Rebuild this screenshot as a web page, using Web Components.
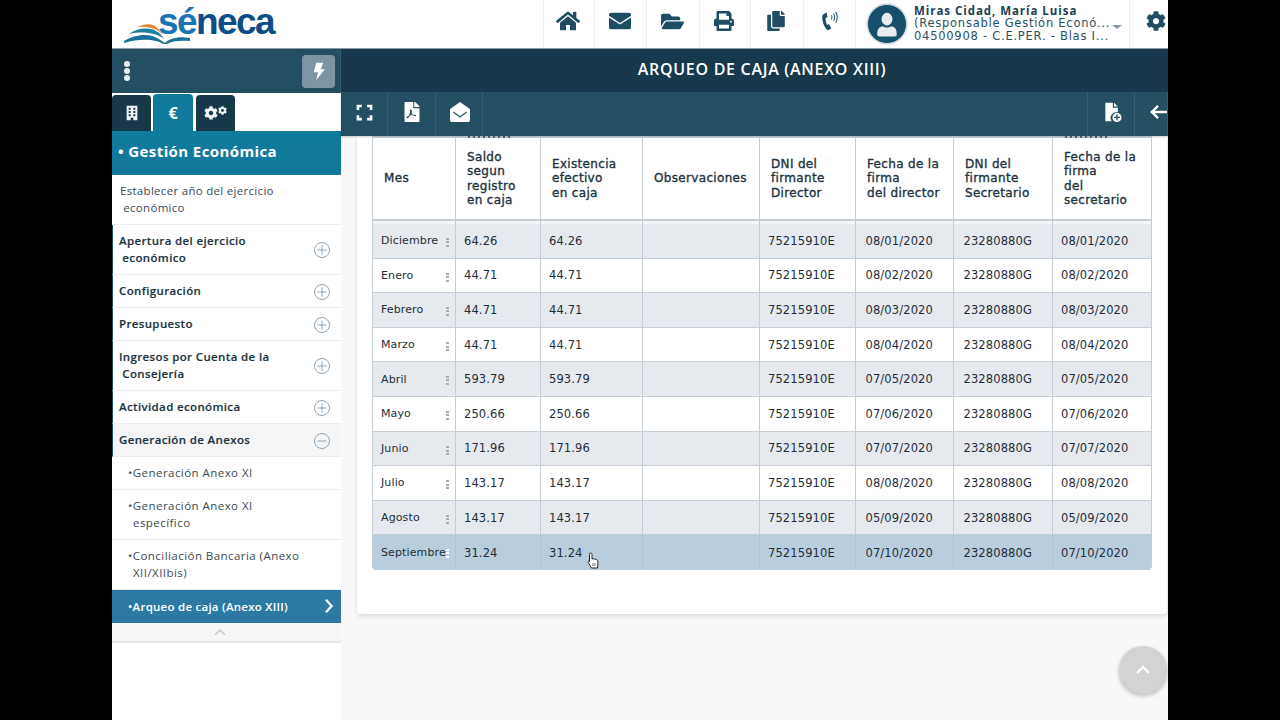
<!DOCTYPE html>
<html lang="es">
<head>
<meta charset="utf-8">
<title>Arqueo de caja</title>
<style>
  html, body { margin: 0; height: 100%; background: #000; overflow: hidden; }
  body { display: flex; justify-content: center; font-family: "Open Sans", "DejaVu Sans", sans-serif; }
</style>
</head>
<body>
<seneca-app></seneca-app>

<script>
const ICONS = {
    home: ["0 0 576 512", "M280.37 148.26L96 300.11V464a16 16 0 0 0 16 16l112.06-.29a16 16 0 0 0 15.92-16V368a16 16 0 0 1 16-16h64a16 16 0 0 1 16 16v95.64a16 16 0 0 0 16 16.05L464 480a16 16 0 0 0 16-16V300L295.67 148.26a12.19 12.19 0 0 0-15.3 0zM571.6 251.47L488 182.56V44.05a12 12 0 0 0-12-12h-56a12 12 0 0 0-12 12v72.61L318.47 43a48 48 0 0 0-61 0L4.34 251.47a12 12 0 0 0-1.6 16.9l25.5 31A12 12 0 0 0 45.15 301l235.22-193.74a12.19 12.19 0 0 1 15.3 0L530.9 301a12 12 0 0 0 16.9-1.6l25.5-31a12 12 0 0 0-1.7-16.93z"],
    mail: ["0 0 512 512", "M48 64h416c26.5 0 48 21.5 48 48v22L256 300 0 134v-22c0-26.5 21.5-48 48-48zM0 174v226c0 26.5 21.5 48 48 48h416c26.5 0 48-21.5 48-48V174L256 340z"],
    folder: ["0 0 576 512", "M572.694 292.093L500.27 416.248A63.997 63.997 0 0 1 444.989 448H45.025c-18.523 0-30.064-20.093-20.731-36.093l72.424-124.155A64 64 0 0 1 152 256h399.964c18.523 0 30.064 20.093 20.73 36.093zM152 224h328v-48c0-26.51-21.49-48-48-48H272l-64-64H48C21.49 64 0 85.49 0 112v278.046l69.077-118.418C86.214 242.25 117.989 224 152 224z"],
    print: ["0 0 512 512", "M448 192V77.25c0-8.49-3.37-16.62-9.37-22.63L393.37 9.37c-6-6-14.14-9.37-22.63-9.37H96C78.33 0 64 14.33 64 32v160c-35.35 0-64 28.65-64 64v112c0 8.84 7.16 16 16 16h48v96c0 17.67 14.33 32 32 32h320c17.67 0 32-14.33 32-32v-96h48c8.84 0 16-7.16 16-16V256c0-35.35-28.65-64-64-64zm-64 256H128v-96h256v96zm0-224H128V64h192v48c0 8.84 7.16 16 16 16h48v96zm48 72c-13.25 0-24-10.75-24-24 0-13.26 10.75-24 24-24s24 10.74 24 24c0 13.25-10.75 24-24 24z"],
    copy: ["0 0 448 512", "M320 448v40c0 13.25-10.75 24-24 24H24c-13.25 0-24-10.75-24-24V120c0-13.25 10.75-24 24-24h72v296c0 30.88 25.12 56 56 56h168zm0-344V0H152c-13.25 0-24 10.75-24 24v368c0 13.25 10.75 24 24 24h272c13.25 0 24-10.75 24-24V128H344c-13.2 0-24-10.8-24-24zm120.97-31.03L375.03 7.03A24 24 0 0 0 358.06 0H352v96h96v-6.06a24 24 0 0 0-7.03-16.97z"],
    gear: ["0 0 512 512", "M487.4 315.7l-42.6-24.6c4.3-23.2 4.3-47 0-70.2l42.6-24.6c4.9-2.8 7.1-8.6 5.5-14-11.1-35.6-30-67.8-54.7-94.6-3.8-4.1-10-5.1-14.8-2.3L380.8 110c-17.9-15.4-38.5-27.3-60.8-35.1V25.8c0-5.6-3.9-10.5-9.4-11.7-36.7-8.2-74.3-7.8-109.2 0-5.5 1.2-9.4 6.1-9.4 11.7V75c-22.2 7.9-42.8 19.8-60.8 35.1L88.7 85.5c-4.9-2.8-11-1.9-14.8 2.3-24.7 26.7-43.6 58.9-54.7 94.6-1.7 5.4.6 11.2 5.5 14L67.3 221c-4.3 23.2-4.3 47 0 70.2l-42.6 24.6c-4.9 2.8-7.1 8.6-5.5 14 11.1 35.6 30 67.8 54.7 94.6 3.8 4.1 10 5.1 14.8 2.3l42.6-24.6c17.9 15.4 38.5 27.3 60.8 35.1v49.2c0 5.6 3.9 10.5 9.4 11.7 36.7 8.2 74.3 7.8 109.2 0 5.5-1.2 9.4-6.1 9.4-11.7v-49.2c22.2-7.9 42.8-19.8 60.8-35.1l42.6 24.6c4.9 2.8 11 1.9 14.8-2.3 24.7-26.7 43.6-58.9 54.7-94.6 1.5-5.5-.7-11.3-5.6-14.1zM256 336c-44.1 0-80-35.9-80-80s35.9-80 80-80 80 35.9 80 80-35.9 80-80 80z"],
    phone: ["0 0 24 24", "M9.2 2.5 6 4.6c-1.5 1-1.5 3-1.3 5.2.4 3.6 1.6 7 3.6 10 .9 1.3 2.2 2.6 3.6 2l2.6-1.8-2.6-4.8-2 1.1c-1.1-2.4-1.7-5-1.7-7.6l2.2-.9zM15 5.5c1 1.5 1 3.5 0 5l-.8-.6c.6-1.1.6-2.7 0-3.8zM17.3 3.5c1.9 2.7 1.9 6.3 0 9l-.8-.6c1.5-2.3 1.5-5.5 0-7.8zM19.6 1.7c2.6 3.7 2.6 8.8 0 12.6l-.8-.6c2.2-3.3 2.2-8 0-11.3z"],
    bolt: ["0 0 24 24", "M9 1h9l-3 8h5L9 23l2.5-10H6z"],
    expand: ["0 0 24 24", "M3 9V3h6v3H6v3zM15 3h6v6h-3V6h-3zM21 15v6h-6v-3h3v-3zM9 21H3v-6h3v3h3z"],
    pdf: ["0 0 384 512", "M224 136V0H24C10.7 0 0 10.7 0 24v464c0 13.3 10.7 24 24 24h336c13.3 0 24-10.7 24-24V160H248c-13.2 0-24-10.800-24-24zM248 0v128h136v-6.100c0-6.300-2.500-12.400-7-16.900L279 7c-4.500-4.500-10.600-7-17-7zM178 214c8 0 12 8 10 20-2 16-4 28-8 42 8 20 22 38 38 50 24-3 62-6 76 8 10 12 2 28-16 28-20 0-40-10-66-30-26 4-52 12-78 22-22 38-42 62-60 62-14 0-24-12-18-26 8-18 32-34 58-46 14-26 24-50 32-76-8-26-12-50-6-68 4-10 10-16 18-16zm-4 98c-6 16-12 30-20 44 14-6 28-10 42-14-8-10-16-20-22-30z"],
    mailopen: ["0 0 512 512", "M256 0 20 168C8 176 0 188 0 204v260c0 26 22 48 48 48h416c26 0 48-22 48-48V204c0-16-8-28-20-36zM94 246l162 118 162-118 17 24-179 130L77 270z"],
    filePlus: ["0 0 24 24", "M4 1h9v6h6v5.200A7 7 0 0 0 11.600 23H4zM14.500 1 19 5.500h-4.500zM18 13a5.500 5.500 0 1 1 0 11 5.500 5.500 0 0 1 0-11zm-.8 2v2.700h-2.700v1.600h2.700V22h1.600v-2.700h2.700v-1.600h-2.700V15z"],
    back: ["0 0 24 24", "M11 3.500 13 5.700 8.300 10.500H24v3H8.300L13 18.300 11 20.500 2.500 12z"],
    building: ["0 0 24 24", "M4 1h16v22h-6v-4h-4v4H4zM7 4v3h3V4zm7 0v3h3V4zM7 9v3h3V9zm7 0v3h3V9zM7 14v3h3v-3zm7 0v3h3v-3z"],
    chevronRight: ["0 0 24 24", "M7 2.500 10 0l11 12-11 12-3-2.500L15.500 12z"]
};

function icon(name, size, color, extra = "") {
    const [viewBox, d] = ICONS[name];
    return `<svg style="width:${size}px;height:${size}px;fill:${color};display:block;${extra}" viewBox="${viewBox}"><path fill-rule="evenodd" d="${d}"/></svg>`;
}

class SenecaLogo extends HTMLElement {
    constructor() {
        super();
        this.attachShadow({ mode: "open" });
        this.shadowRoot.innerHTML = `
        <style>
            :host { display: flex; align-items: flex-start; width: 170px; height: 48px; }
            svg { flex: none; width: 74px; height: 44px; margin-left: 11px; }
            span {
                margin: 0 0 0 -39px;
                font: bold 37px/43px "Liberation Sans", sans-serif;
                letter-spacing: -1.6px;
                color: #0e4c87;
                white-space: nowrap;
            }
            span b { color: #1874b4; }
        </style>
        <svg viewBox="0 0 74 44">
            <path d="M14 27C20 24 27 23 32 26 36 29 40 34 41 36 36 30 28 26 14 27Z" fill="#e58532"/>
            <path d="M6 34C14 28 26 27 33 31 37 33 40 37 41 39 34 33 20 31 6 34Z" fill="#1c7f9e"/>
            <path d="M1 41C10 35 24 33 32 37 36 39 39 41 42 43 46 39 54 36 67 38V41C56 40 48 41 42 45 36 40 20 37 1 43Z" fill="#1b6f9b"/>
        </svg>
        <span><b>sé</b>neca</span>`;
    }
}

class TopIcon extends HTMLElement {
    constructor() {
        super();
        this.attachShadow({ mode: "open" });
        this.shadowRoot.innerHTML = `
        <style>
            :host { display: flex; align-items: center; justify-content: center; height: 48px; border-left: 1px solid #eeeeee; box-sizing: border-box; padding: 0 2px 6px 0; }
        </style>
        ${icon(this.getAttribute("icon"), this.getAttribute("size") || 22, "#1f4d64")}`;
    }
}

class UserBox extends HTMLElement {
    constructor() {
        super();
        this.attachShadow({ mode: "open" });
        this.shadowRoot.innerHTML = `
        <style>
            :host { display: flex; align-items: center; width: 275px; height: 48px; box-sizing: border-box; border-left: 1px solid #eeeeee; border-right: 1px solid #eeeeee; padding-left: 11px; padding-bottom: 1px; }
            .avatar { flex: none; width: 38px; height: 38px; border-radius: 50%; background: #17506a; border: 1px solid #c9d3d8; box-shadow: 0 0 0 1px #e6eaec; display: flex; align-items: center; justify-content: center; }
            .txt { margin-left: 7px; font: 11.500px/13.300px "DejaVu Sans", sans-serif; letter-spacing: .75px; color: #2a4f62; white-space: nowrap; position: relative; width: 208px; }
            .name { color: #1d4053; font-family: "Open Sans", sans-serif; font-weight: 700; letter-spacing: .95px; }
            .caret { position: absolute; right: 0; top: 21px; width: 0; height: 0; border: 5px solid transparent; border-top: 4px solid #8a9aa5; border-bottom: 0; }
        </style>
        <div class="avatar">
            <svg width="26" height="26" viewBox="0 0 24 24" fill="#e9ecee"><ellipse cx="12" cy="7.500" rx="5" ry="5.800"/><path d="M3 22c0-5 1-7 5-8 2 1.500 6 1.500 8 0 4 1 5 3 5 8 0 1-1 1.500-2 1.500H5c-1 0-2-.5-2-1.500z"/></svg>
        </div>
        <div class="txt">
            <div class="name">Miras Cidad, María Luisa</div>
            <div>(Responsable Gestión Econó...</div>
            <div>04500908 - C.E.PER. - Blas I...</div>
            <div class="caret"></div>
        </div>`;
    }
}

class TopBar extends HTMLElement {
    constructor() {
        super();
        this.attachShadow({ mode: "open" });
        this.shadowRoot.innerHTML = `
        <style>
            :host { display: flex; height: 49px; background: #fff; border-bottom: 1px solid #8b9ca6; box-sizing: border-box; overflow: hidden; }
            .spacer { flex: 1; }
            .icons { display: grid; grid-template-columns: 51px 52px 53px 51px 53px 52px; }
            .gear { width: 38px; display: flex; align-items: center; padding: 0 0 6px 16px; box-sizing: border-box; }
        </style>
        <seneca-logo></seneca-logo>
        <div class="spacer"></div>
        <div class="icons">
            <top-icon icon="home" size="24"></top-icon>
            <top-icon icon="mail" size="22"></top-icon>
            <top-icon icon="folder" size="23"></top-icon>
            <top-icon icon="print" size="20"></top-icon>
            <top-icon icon="copy" size="20"></top-icon>
            <top-icon icon="phone" size="22"></top-icon>
        </div>
        <user-box></user-box>
        <div class="gear">${icon("gear", 20, "#1f4d64", "flex:none")}</div>`;
    }
}

class MenuItem extends HTMLElement {
    constructor() {
        super();
        const mark = this.getAttribute("mark");
        let end = "";
        if (mark === "plus" || mark === "minus") {
            end = `<svg class="end" width="18" height="18" viewBox="0 0 18 18" fill="none" stroke="#8ea4b4" stroke-width="1">
                <circle cx="9" cy="9" r="7.500"/><path d="M4.500 9h9"/>${mark === "plus" ? '<path d="M9 4.500v9"/>' : ""}</svg>`;
        } else if (mark === "chevron") {
            end = `<span class="end">${icon("chevronRight", 14, "#fff")}</span>`;
        }
        this.attachShadow({ mode: "open" });
        this.shadowRoot.innerHTML = `
        <style>
            :host { display: flex; align-items: center; box-sizing: border-box; border-bottom: 1px solid #eeeeee; padding: 0 10px 2px 8px; }
            :host([kind="top"]) { border-left: 1px solid #1f4d64; padding-left: 6px; }
            :host([kind="head"]) { background: #f5f5f5; border-left: 1px solid #1f4d64; padding-left: 6px; }
            :host([kind="sub"]) { padding: 0 30px 1px 16px; }
            :host([kind="active"]) { padding: 0 10px 1px 16px; background: #2c7aa3; border-bottom: 0; }
            .t { flex: 1; font: 11.500px/17px "Open Sans", "DejaVu Sans", sans-serif; letter-spacing: .3px; color: #3a4a55; }
            :host([kind="top"]) .t, :host([kind="head"]) .t { font-weight: 600; letter-spacing: .36px; color: #1c3442; -webkit-text-stroke: .15px #1c3442; }
            :host([kind="sub"]) .t { padding-left: 5px; text-indent: -5px; letter-spacing: .45px; }
            :host([kind="active"]) .t { font-weight: 600; color: #fff; padding-left: 5px; text-indent: -5px; letter-spacing: .25px; }
            .end { flex: none; display: block; margin-top: 3px; }
            span.end { margin: 0 -4px 0 0; }
        </style>
        <div class="t"><slot></slot></div>
        ${end}`;
    }
}

class SideBar extends HTMLElement {
    constructor() {
        super();
        this.attachShadow({ mode: "open" });
        this.shadowRoot.innerHTML = `
        <style>
            :host { display: flex; flex-direction: column; width: 229px; flex: none; background: #fff; height: 671px; overflow: hidden; }
            .head { height: 44px; flex: none; background: #234f62; display: flex; align-items: center; justify-content: space-between; padding: 0 5px 0 12px; box-sizing: border-box; border-right: 1px solid #345d70; }
            .dots { display: grid; gap: 1px; }
            .dots i { display: block; width: 6px; height: 6px; border-radius: 50%; background: #e9edef; }
            .bolt { width: 33px; height: 33px; border-radius: 4px; background: #7d95a3; display: flex; align-items: center; justify-content: center; }
            .tabs { height: 38px; flex: none; display: flex; align-items: flex-end; box-sizing: border-box; }
            .tab { width: 39px; height: 36px; border-radius: 4px 4px 0 0; background: #17394a; display: flex; align-items: center; justify-content: center; margin-right: 2px; }
            .tab.on { width: 40px; height: 37px; background: #0f7a9c; color: #fff; font: bold 16px "Open Sans", sans-serif; margin-right: 3px; }
            .title { height: 44px; flex: none; background: linear-gradient(#0e7b9d, #14799a); color: #fff; font: bold 15px "Open Sans", sans-serif; letter-spacing: .4px; display: flex; align-items: flex-start; padding: 10px 0 0 6px; box-sizing: border-box; }
            menu-item { flex: none; }
            .i33 { height: 33px; }
            .i50 { height: 50px; }
            .collapse { height: 20px; flex: none; background: #f6f6f6; border-bottom: 2px solid #e8e8e8; display: flex; justify-content: center; align-items: center; box-sizing: border-box; padding-right: 13px; }
        </style>
        <div class="head">
            <div class="dots"><i></i><i></i><i></i></div>
            <div class="bolt">${icon("bolt", 19, "#fff")}</div>
        </div>
        <div class="tabs">
            <div class="tab">${icon("building", 16, "#f2f4f5")}</div>
            <div class="tab on">€</div>
            <div class="tab">${icon("gear", 14, "#f2f4f5")}${icon("gear", 9, "#f2f4f5", "margin:-6px 0 0 0")}</div>
        </div>
        <div class="title">• Gestión Económica</div>
        <menu-item kind="plain" class="i50">Establecer año del ejercicio<br>&nbsp;económico</menu-item>
        <menu-item kind="top" mark="plus" class="i50">Apertura del ejercicio<br>&nbsp;económico</menu-item>
        <menu-item kind="top" mark="plus" class="i33">Configuración</menu-item>
        <menu-item kind="top" mark="plus" class="i33">Presupuesto</menu-item>
        <menu-item kind="top" mark="plus" class="i50">Ingresos por Cuenta de la<br>&nbsp;Consejería</menu-item>
        <menu-item kind="top" mark="plus" class="i33">Actividad económica</menu-item>
        <menu-item kind="head" mark="minus" class="i33">Generación de Anexos</menu-item>
        <menu-item kind="sub" class="i33">•Generación Anexo XI</menu-item>
        <menu-item kind="sub" class="i50">•Generación Anexo XI específico</menu-item>
        <menu-item kind="sub" class="i50">•Conciliación Bancaria (Anexo XII/XIIbis)</menu-item>
        <menu-item kind="active" mark="chevron" class="i33">•Arqueo de caja (Anexo XIII)</menu-item>
        <div class="collapse"><svg width="12" height="7" viewBox="0 0 12 7" fill="none" stroke="#c4cacd" stroke-width="1.500"><path d="M1 6l5-5 5 5"/></svg></div>`;
    }
}

class ToolBar extends HTMLElement {
    constructor() {
        super();
        this.attachShadow({ mode: "open" });
        this.shadowRoot.innerHTML = `
        <style>
            :host { display: block; flex: none; position: relative; z-index: 2; }
            .title { height: 43px; background: #17394b; color: #fff; font: 600 16px/40px "Open Sans", sans-serif; letter-spacing: .7px; text-align: center; padding-left: 15px; }
            .bar { height: 44px; background: #234f63; display: flex; box-shadow: 0 1px 2px rgba(0,0,0,.2); }
            .b { width: 47px; border-right: 1px solid #345e72; display: flex; align-items: center; justify-content: center; box-sizing: border-box; padding: 0 0 4px 1px; }
            .sp { flex: 1; border-right: 1px solid #345e72; }
        </style>
        <div class="title">ARQUEO DE CAJA (ANEXO XIII)</div>
        <div class="bar">
            <div class="b">${icon("expand", 21, "#fff")}</div>
            <div class="b" style="width:48px">${icon("pdf", 20, "#fff")}</div>
            <div class="b">${icon("mailopen", 20, "#fff")}</div>
            <div class="sp"></div>
            <div class="b">${icon("filePlus", 20, "#fff")}</div>
            <div class="b" style="width:33px;justify-content:flex-start;padding-left:13px;overflow:hidden">${icon("back", 20, "#fff", "flex:none")}</div>
        </div>`;
    }
}

const MONTHS = [
    ["Diciembre", "64.26", "08/01/2020"],
    ["Enero", "44.71", "08/02/2020"],
    ["Febrero", "44.71", "08/03/2020"],
    ["Marzo", "44.71", "08/04/2020"],
    ["Abril", "593.79", "07/05/2020"],
    ["Mayo", "250.66", "07/06/2020"],
    ["Junio", "171.96", "07/07/2020"],
    ["Julio", "143.17", "08/08/2020"],
    ["Agosto", "143.17", "05/09/2020"],
    ["Septiembre", "31.24", "07/10/2020"]
];

class ArqueoTable extends HTMLElement {
    constructor() {
        super();
        const rows = MONTHS.map(([mes, val, fecha], i) => `
            <tr class="${i === 9 ? "sel" : i % 2 ? "even" : "odd"}">
                <td class="mes">${mes}<i class="grip"></i></td>
                <td>${val}</td><td>${val}</td><td></td>
                <td>75215910E</td><td class="w">${fecha}</td><td class="w">23280880G</td><td>${fecha}</td>
            </tr>`).join("");
        this.attachShadow({ mode: "open" });
        this.shadowRoot.innerHTML = `
        <style>
            :host { display: block; width: 780px; font-family: "DejaVu Sans", sans-serif; color: #1e2e38; }
            table { border-collapse: separate; border-spacing: 0; table-layout: fixed; width: 780px; border-left: 1px solid #c6ced5; border-right: 1px solid #c6ced5; border-radius: 0 0 4px 4px; overflow: hidden; }
            th { position: relative; background: #fff; font: 400 12px/14.500px "DejaVu Sans", sans-serif; -webkit-text-stroke: .35px #1d3340; letter-spacing: .33px; text-align: left; padding: 0 0 0 11px; height: 83px; border-right: 1px solid #c6ced5; box-sizing: border-box; color: #1d3340; border-top: 2px solid #c9d4da; }
            th:last-child, td:last-child { border-right: 0; }
            .frag { position: absolute; top: -2px; left: 12px; width: 44px; height: 2px; background: repeating-linear-gradient(90deg, #56656f 0 2px, transparent 2px 5px); }
            tr.sp td { height: 5px; padding: 0; border-top: 2px solid #c6ced5; border-bottom: 0; background: #f4f5f7; box-sizing: border-box; }
            td { height: 34.600px; font-size: 11.500px; letter-spacing: .12px; padding: 0 0 0 8px; border-right: 1px solid #c6ced5; border-bottom: 1px solid #c6ced5; box-sizing: border-box; white-space: nowrap; }
            td.w { padding-left: 9.500px; }
            td.mes { position: relative; font-size: 11px; }
            tr.odd td { background: #e6e9ee; }
            tr.even td { background: #fff; }
            tr.sel td { background: #b9cddd; border-color: #adc2d3; border-bottom: 0; }
            .grip { position: absolute; right: 6px; top: 14px; width: 3px; height: 9px; background: repeating-linear-gradient(#a5adb3 0 2px, transparent 2px 3.500px); }
            tr.sel .grip { background: repeating-linear-gradient(#fff 0 2px, transparent 2px 3.500px); }
        </style>
        <table>
            <colgroup><col style="width:83px"><col style="width:85px"><col style="width:102px"><col style="width:117px"><col style="width:96px"><col style="width:98px"><col style="width:99px"><col></colgroup>
            <thead>
                <tr>
                    <th>Mes</th>
                    <th><i class="frag"></i>Saldo<br>segun<br>registro<br>en caja</th>
                    <th>Existencia<br>efectivo<br>en caja</th>
                    <th>Observaciones</th>
                    <th>DNI del<br>firmante<br>Director</th>
                    <th>Fecha de la<br>firma<br>del director</th>
                    <th>DNI del<br>firmante<br>Secretario</th>
                    <th><i class="frag"></i>Fecha de la<br>firma<br>del<br>secretario</th>
                </tr>
                <tr class="sp"><td></td><td></td><td></td><td></td><td></td><td></td><td></td><td></td></tr>
            </thead>
            <tbody>${rows}</tbody>
        </table>`;
    }
}

class ScrollTop extends HTMLElement {
    constructor() {
        super();
        this.attachShadow({ mode: "open" });
        this.shadowRoot.innerHTML = `
        <style>
            :host { position: absolute; right: 1px; bottom: 26px; width: 48px; height: 48px; border-radius: 50%; background: #d3d3d6; box-shadow: 0 2px 4px rgba(0,0,0,.25); display: flex; align-items: center; justify-content: center; z-index: 3; }
        </style>
        <svg width="16" height="10" viewBox="0 0 16 10" fill="none" stroke="#fff" stroke-width="2.200"><path d="M2 8l6-6 6 6"/></svg>`;
    }
}

class SenecaApp extends HTMLElement {
    constructor() {
        super();
        this.attachShadow({ mode: "open" });
        this.shadowRoot.innerHTML = `
        <style>
            :host { display: flex; flex-direction: column; width: 1056px; height: 720px; background: #fff; position: relative; overflow: hidden; }
            .row { flex: 1; display: flex; min-height: 0; }
            .main { flex: 1; display: flex; flex-direction: column; min-width: 0; background: #f8f8f9; position: relative; }
            .content { flex: 1; padding: 0 1px 0 16px; overflow: hidden; }
            .card { background: #fff; box-shadow: 0 2px 5px rgba(0,0,0,.12); padding: 0 0 44px 15px; border-radius: 0 0 4px 4px; }
            .cursor { position: absolute; left: 246px; top: 503px; z-index: 2; }
        </style>
        <top-bar></top-bar>
        <div class="row">
            <side-bar></side-bar>
            <div class="main">
                <tool-bar></tool-bar>
                <div class="content">
                    <div class="card"><arqueo-table></arqueo-table></div>
                </div>
                <svg class="cursor" width="13" height="17" viewBox="0 0 13 17">
                    <path d="M3.500 1c1 0 1.500.6 1.500 1.500V7l1-.3c.8-.2 1.200.2 1.400.5.7-.3 1.300-.1 1.600.4.7-.2 1.500.2 1.700 1 .3 1.400.3 3 0 4.600L10.500 16h-6L1.200 10.500C.8 9.700 1.400 9 2.200 9.300L2.500 9.700V2.500C2.500 1.600 2.800 1 3.500 1z" fill="#fff" stroke="#222" stroke-width="1"/>
                    <path d="M6 11v3M8 11v3" stroke="#444" stroke-width=".8"/>
                </svg>
                <scroll-top></scroll-top>
            </div>
        </div>`;
    }
}

customElements.define("seneca-logo", SenecaLogo);
customElements.define("top-icon", TopIcon);
customElements.define("user-box", UserBox);
customElements.define("top-bar", TopBar);
customElements.define("menu-item", MenuItem);
customElements.define("side-bar", SideBar);
customElements.define("tool-bar", ToolBar);
customElements.define("arqueo-table", ArqueoTable);
customElements.define("scroll-top", ScrollTop);
customElements.define("seneca-app", SenecaApp);
</script>
</body>
</html>
